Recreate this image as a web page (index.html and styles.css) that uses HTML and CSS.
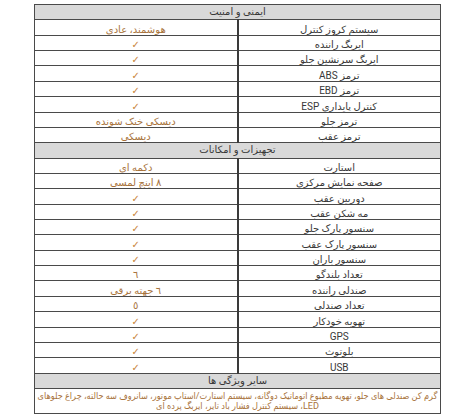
FILE: index.html
```
<!DOCTYPE html>
<html lang="fa">
<head>
<meta charset="utf-8">
<link rel="stylesheet" href="styles.css">
</head>
<body>
<table class="specs" dir="rtl">
<tr class="sec"><td colspan="2">ایمنی و امنیت</td></tr>
<tr><td class="k">سیستم کروز کنترل</td><td class="v">هوشمند، عادی</td></tr>
<tr><td class="k">ایربگ راننده</td><td class="v chk">✓</td></tr>
<tr><td class="k">ایربگ سرنشین جلو</td><td class="v chk">✓</td></tr>
<tr><td class="k">ترمز ABS</td><td class="v chk">✓</td></tr>
<tr><td class="k">ترمز EBD</td><td class="v chk">✓</td></tr>
<tr><td class="k">کنترل پایداری ESP</td><td class="v chk">✓</td></tr>
<tr><td class="k">ترمز جلو</td><td class="v">دیسکی خنک شونده</td></tr>
<tr><td class="k">ترمز عقب</td><td class="v">دیسکی</td></tr>
<tr class="sec"><td colspan="2">تجهیزات و امکانات</td></tr>
<tr><td class="k">استارت</td><td class="v">دکمه ای</td></tr>
<tr><td class="k">صفحه نمایش مرکزی</td><td class="v">۸ اینچ لمسی</td></tr>
<tr><td class="k">دوربین عقب</td><td class="v chk">✓</td></tr>
<tr><td class="k">مه شکن عقب</td><td class="v chk">✓</td></tr>
<tr><td class="k">سنسور پارک جلو</td><td class="v chk">✓</td></tr>
<tr><td class="k">سنسور پارک عقب</td><td class="v chk">✓</td></tr>
<tr><td class="k">سنسور باران</td><td class="v chk">✓</td></tr>
<tr><td class="k">تعداد بلندگو</td><td class="v">٦</td></tr>
<tr><td class="k">صندلی راننده</td><td class="v">٦ جهته برقی</td></tr>
<tr><td class="k">تعداد صندلی</td><td class="v">٥</td></tr>
<tr><td class="k">تهویه خودکار</td><td class="v chk">✓</td></tr>
<tr><td class="k">GPS</td><td class="v chk">✓</td></tr>
<tr><td class="k">بلوتوث</td><td class="v chk">✓</td></tr>
<tr><td class="k">USB</td><td class="v chk">✓</td></tr>
<tr class="sec"><td colspan="2">سایر ویژگی ها</td></tr>
<tr class="other"><td colspan="2">گرم کن صندلی های جلو، تهویه مطبوع اتوماتیک دوگانه، سیستم استارت/استاپ موتور، سانروف سه حالته، چراغ جلوهای<br>LED، سیستم کنترل فشار باد تایر، ایربگ پرده ای</td></tr>
</table>
</body>
</html>
```
FILE: styles.css
```
html, body {
  margin: 0;
  padding: 0;
  background: #ffffff;
}
body {
  padding-top: 4px;
  font-family: Roboto, "DejaVu Sans", sans-serif;
}
.specs {
  margin-left: 34px;
  width: 407px;
  border-collapse: collapse;
  table-layout: fixed;
  font-size: 10px;
  color: #383838;
  border: 1px solid #4a4a4a;
}
.specs td {
  border: 1px solid #4a4a4a;
  text-align: center;
  padding: 0;
  height: 14.36px;
  line-height: 10px;
  vertical-align: bottom;
  white-space: nowrap;
  overflow: hidden;
}
.specs .k {
  width: 50%;
  border-left: 2px solid #3a3a3a;
}
.sec td {
  background: #d9d9d9;
  vertical-align: middle;
}
.v {
  color: #a8733c;
}
.chk {
  color: #c9843a;
  vertical-align: top;
  line-height: 11px;
}
.other td {
  height: 24px;
  color: #a8733c;
  line-height: 10px;
  font-family: Roboto, "DejaVu Sans Condensed", "DejaVu Sans", sans-serif;
  font-size: 9.1px;
  vertical-align: middle;
}
```
